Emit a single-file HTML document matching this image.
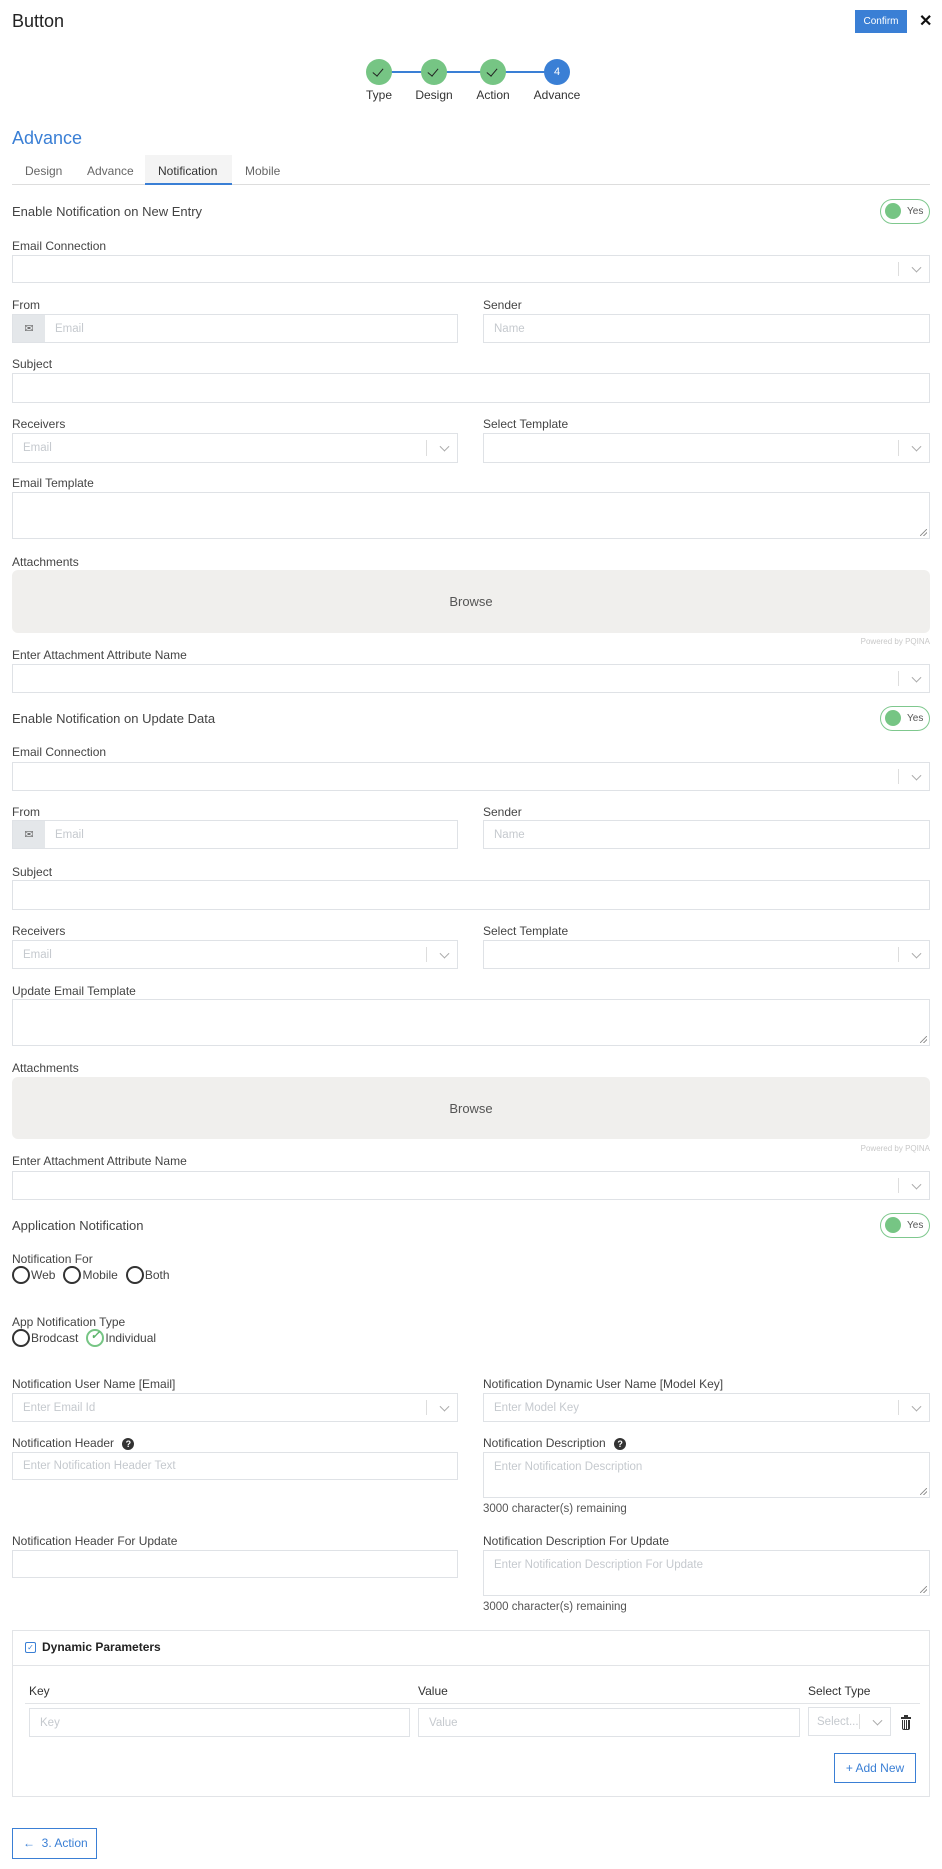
<!DOCTYPE html>
<html><head><meta charset="utf-8"><style>
*{box-sizing:border-box;margin:0;padding:0}
body{width:942px;height:1869px;background:#fff;font-family:"Liberation Sans",sans-serif;color:#444;position:relative;overflow:hidden}
.a{position:absolute}
.lb{position:absolute;font-size:12px;color:#444;white-space:nowrap}
.in{position:absolute;border:1px solid #dfe2e6;background:#fff;font-size:11.5px;color:#c5c9ce;padding-left:10px;display:flex;align-items:center}
.sel::after{content:"";position:absolute;right:30px;top:6px;bottom:6px;border-left:1px solid #ddd}
.chev{position:absolute;right:9px;top:50%;width:7px;height:7px;border-right:1.3px solid #aaa;border-bottom:1.3px solid #aaa;transform:translateY(-70%) rotate(45deg)}
.ta::after{content:"";position:absolute;right:2px;bottom:2px;width:7px;height:7px;background:linear-gradient(135deg,transparent 45%,#999 46%,#999 54%,transparent 55%,transparent 70%,#999 71%,#999 79%,transparent 80%)}
.tg{position:absolute;width:50px;height:25px;border:1.5px solid #7fc88e;border-radius:13px}
.tg i{position:absolute;left:4px;top:3px;width:16px;height:16px;border-radius:50%;background:#76c584}
.tg span{position:absolute;left:26px;top:6px;font-size:10px;color:#555}
.br{position:absolute;left:12px;width:918px;background:#f0efed;border-radius:6px;font-size:13px;color:#555;display:flex;align-items:center;justify-content:center}
.pw{position:absolute;right:12px;font-size:8px;color:#c8c8c8}
.st{position:absolute;width:26px;height:26px;border-radius:50%;background:#76c584;top:59px;color:#222;font-size:11px;text-align:center;line-height:26px}
.st.c::after{content:"";position:absolute;left:9px;top:7px;width:5px;height:9px;border-right:1.4px solid #222;border-bottom:1.4px solid #222;transform:rotate(40deg)}
.sl{position:absolute;top:88px;font-size:12px;color:#333;transform:translateX(-50%)}
.rd{display:inline-block;width:18px;height:18px;border:2px solid #333;border-radius:50%;vertical-align:middle;margin-right:1px}
.rl{position:absolute;font-size:12px;color:#444;white-space:nowrap}
.rl span{vertical-align:middle;margin-right:8px}
</style></head><body>
<div class="a" style="left:12px;top:11px;font-size:18px;color:#222">Button</div>
<div class="a" style="left:855px;top:10px;width:52px;height:23px;background:#3a7fd5;color:#fff;font-size:10px;text-align:center;line-height:23px">Confirm</div>
<div class="a" style="left:919px;top:11px;font-size:16px;font-weight:bold;color:#111">✕</div>

<div class="a" style="left:379px;top:71px;width:178px;height:2px;background:#3a7fd5"></div>
<div class="st c" style="left:366px"></div>
<div class="st c" style="left:421px"></div>
<div class="st c" style="left:480px"></div>
<div class="st" style="left:544px;background:#3a7fd5;color:#fff">4</div>
<div class="sl" style="left:379px">Type</div>
<div class="sl" style="left:434px">Design</div>
<div class="sl" style="left:493px">Action</div>
<div class="sl" style="left:557px">Advance</div>

<div class="a" style="left:12px;top:128px;font-size:18px;color:#3a7fd5">Advance</div>
<div class="a" style="left:12px;top:184px;width:918px;height:1px;background:#ddd"></div>
<div class="a" style="left:145px;top:155px;width:87px;height:30px;background:#f4f4f4;border-bottom:2px solid #3a7fd5"></div>
<div class="a" style="left:25px;top:164px;font-size:12px;color:#666">Design</div>
<div class="a" style="left:87px;top:164px;font-size:12px;color:#666">Advance</div>
<div class="a" style="left:158px;top:164px;font-size:12px;color:#333">Notification</div>
<div class="a" style="left:245px;top:164px;font-size:12px;color:#666">Mobile</div>

<div class="lb" style="left:12px;top:204px;font-size:13px">Enable Notification on New Entry</div>
<div class="tg" style="left:880px;top:199px"><i></i><span>Yes</span></div>
<div class="lb" style="left:12px;top:239px">Email Connection</div>
<div class="in sel" style="left:12px;top:255px;width:918px;height:28px"><b class="chev"></b></div>
<div class="lb" style="left:12px;top:298px">From</div>
<div class="in" style="left:12px;top:314px;width:446px;height:29px;padding-left:0"><div style="width:32px;height:100%;background:#e4e7ea;display:flex;align-items:center;justify-content:center;color:#666;font-size:11px">✉</div><span style="margin-left:10px">Email</span></div>
<div class="lb" style="left:483px;top:298px">Sender</div>
<div class="in" style="left:483px;top:314px;width:447px;height:29px">Name</div>
<div class="lb" style="left:12px;top:357px">Subject</div>
<div class="in" style="left:12px;top:373px;width:918px;height:30px"></div>
<div class="lb" style="left:12px;top:417px">Receivers</div>
<div class="in sel" style="left:12px;top:433px;width:446px;height:30px">Email<b class="chev"></b></div>
<div class="lb" style="left:483px;top:417px">Select Template</div>
<div class="in sel" style="left:483px;top:433px;width:447px;height:30px"><b class="chev"></b></div>
<div class="lb" style="left:12px;top:476px">Email Template</div>
<div class="in ta" style="left:12px;top:492px;width:918px;height:47px"></div>
<div class="lb" style="left:12px;top:555px">Attachments</div>
<div class="br" style="top:570px;height:63px">Browse</div>
<div class="pw" style="top:637px">Powered by PQINA</div>
<div class="lb" style="left:12px;top:648px">Enter Attachment Attribute Name</div>
<div class="in sel" style="left:12px;top:664px;width:918px;height:29px"><b class="chev"></b></div>

<div class="lb" style="left:12px;top:711px;font-size:13px">Enable Notification on Update Data</div>
<div class="tg" style="left:880px;top:706px"><i></i><span>Yes</span></div>
<div class="lb" style="left:12px;top:745px">Email Connection</div>
<div class="in sel" style="left:12px;top:762px;width:918px;height:29px"><b class="chev"></b></div>
<div class="lb" style="left:12px;top:805px">From</div>
<div class="in" style="left:12px;top:820px;width:446px;height:29px;padding-left:0"><div style="width:32px;height:100%;background:#e4e7ea;display:flex;align-items:center;justify-content:center;color:#666;font-size:11px">✉</div><span style="margin-left:10px">Email</span></div>
<div class="lb" style="left:483px;top:805px">Sender</div>
<div class="in" style="left:483px;top:820px;width:447px;height:29px">Name</div>
<div class="lb" style="left:12px;top:865px">Subject</div>
<div class="in" style="left:12px;top:880px;width:918px;height:30px"></div>
<div class="lb" style="left:12px;top:924px">Receivers</div>
<div class="in sel" style="left:12px;top:940px;width:446px;height:29px">Email<b class="chev"></b></div>
<div class="lb" style="left:483px;top:924px">Select Template</div>
<div class="in sel" style="left:483px;top:940px;width:447px;height:29px"><b class="chev"></b></div>
<div class="lb" style="left:12px;top:984px">Update Email Template</div>
<div class="in ta" style="left:12px;top:999px;width:918px;height:47px"></div>
<div class="lb" style="left:12px;top:1061px">Attachments</div>
<div class="br" style="top:1077px;height:62px">Browse</div>
<div class="pw" style="top:1144px">Powered by PQINA</div>
<div class="lb" style="left:12px;top:1154px">Enter Attachment Attribute Name</div>
<div class="in sel" style="left:12px;top:1171px;width:918px;height:29px"><b class="chev"></b></div>

<div class="lb" style="left:12px;top:1218px;font-size:13px">Application Notification</div>
<div class="tg" style="left:880px;top:1213px"><i></i><span>Yes</span></div>
<div class="lb" style="left:12px;top:1252px">Notification For</div>
<div class="rl" style="left:12px;top:1266px"><i class="rd"></i><span>Web</span><i class="rd"></i><span>Mobile</span><i class="rd"></i><span>Both</span></div>
<div class="lb" style="left:12px;top:1315px">App Notification Type</div>
<div class="rl" style="left:12px;top:1329px"><i class="rd"></i><span>Brodcast</span><i class="rd" style="border-color:#76c584;position:relative"><b style="position:absolute;left:2px;top:-3px;color:#5bb36b;font-size:12px">✓</b></i><span>Individual</span></div>

<div class="lb" style="left:12px;top:1377px">Notification User Name [Email]</div>
<div class="in sel" style="left:12px;top:1393px;width:446px;height:29px">Enter Email Id<b class="chev"></b></div>
<div class="lb" style="left:483px;top:1377px">Notification Dynamic User Name [Model Key]</div>
<div class="in sel" style="left:483px;top:1393px;width:447px;height:29px">Enter Model Key<b class="chev"></b></div>
<div class="lb" style="left:12px;top:1436px">Notification Header <b style="display:inline-block;width:12px;height:12px;border-radius:50%;background:#333;color:#fff;font-size:9px;text-align:center;line-height:12px;margin-left:5px">?</b></div>
<div class="in" style="left:12px;top:1452px;width:446px;height:28px">Enter Notification Header Text</div>
<div class="lb" style="left:483px;top:1436px">Notification Description <b style="display:inline-block;width:12px;height:12px;border-radius:50%;background:#333;color:#fff;font-size:9px;text-align:center;line-height:12px;margin-left:5px">?</b></div>
<div class="in ta" style="left:483px;top:1452px;width:447px;height:46px;align-items:flex-start;padding-top:8px">Enter Notification Description</div>
<div class="lb" style="left:483px;top:1503px;font-size:11.5px;color:#555">3000 character(s) remaining</div>
<div class="lb" style="left:12px;top:1534px">Notification Header For Update</div>
<div class="in" style="left:12px;top:1550px;width:446px;height:28px"></div>
<div class="lb" style="left:483px;top:1534px">Notification Description For Update</div>
<div class="in ta" style="left:483px;top:1550px;width:447px;height:46px;align-items:flex-start;padding-top:8px">Enter Notification Description For Update</div>
<div class="lb" style="left:483px;top:1601px;font-size:11.5px;color:#555">3000 character(s) remaining</div>

<div class="a" style="left:12px;top:1630px;width:918px;height:167px;border:1px solid #e2e4e7"></div>
<div class="a" style="left:12px;top:1665px;width:918px;height:1px;background:#e2e4e7"></div>
<div class="a" style="left:25px;top:1642px;width:11px;height:11px;border:1px solid #3a7fd5;border-radius:2px;color:#3a7fd5;font-size:8px;line-height:9px;text-align:center">✓</div>
<div class="lb" style="left:42px;top:1640px;font-weight:bold;color:#222">Dynamic Parameters</div>
<div class="lb" style="left:29px;top:1684px;color:#333">Key</div>
<div class="lb" style="left:418px;top:1684px;color:#333">Value</div>
<div class="lb" style="left:808px;top:1684px;color:#333">Select Type</div>
<div class="a" style="left:25px;top:1703px;width:895px;height:1px;background:#e2e4e7"></div>
<div class="in" style="left:29px;top:1708px;width:381px;height:29px">Key</div>
<div class="in" style="left:418px;top:1708px;width:382px;height:29px">Value</div>
<div class="in sel" style="left:808px;top:1707px;width:83px;height:29px;padding-left:8px">Select...<b class="chev"></b></div>
<div class="a" style="left:901px;top:1717px;width:10px;height:2px;background:#333"></div>
<div class="a" style="left:904px;top:1715px;width:4px;height:2px;background:#333"></div>
<div class="a" style="left:902px;top:1720px;width:8px;height:10px;border:1.5px solid #333;border-top:none;border-radius:0 0 2px 2px;background:repeating-linear-gradient(90deg,#fff 0 1px,#333 1px 2px)"></div>
<div class="a" style="left:834px;top:1753px;width:82px;height:30px;border:1px solid #3a7fd5;color:#3a7fd5;font-size:12px;text-align:center;line-height:28px">+ Add New</div>

<div class="a" style="left:12px;top:1828px;width:85px;height:31px;border:1px solid #3a7fd5;color:#3a7fd5;font-size:12px;line-height:29px;padding-left:10px">←&nbsp; 3. Action</div>
</body></html>
